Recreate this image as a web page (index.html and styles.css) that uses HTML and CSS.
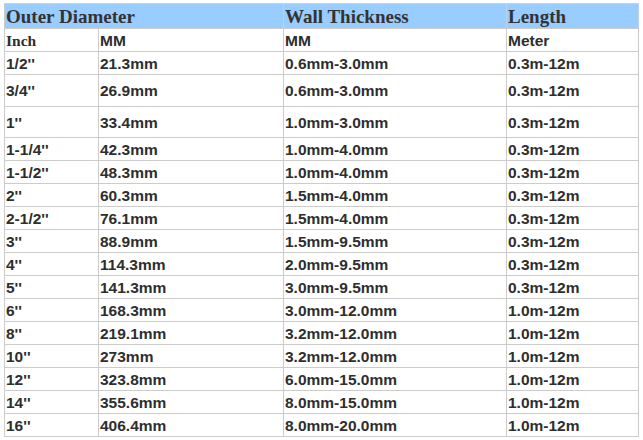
FILE: index.html
```html
<!DOCTYPE html>
<html>
<head>
<meta charset="utf-8">
<link rel="stylesheet" href="styles.css">
</head>
<body>
<table class="spec">
  <colgroup>
    <col class="c1"><col class="c2"><col class="c3"><col class="c4">
  </colgroup>
  <tr class="head">
    <th colspan="2">Outer Diameter</th>
    <th>Wall Thickness</th>
    <th>Length</th>
  </tr>
  <tr class="sub">
    <td class="serif">Inch</td><td>MM</td><td>MM</td><td>Meter</td>
  </tr>
  <tr><td>1/2''</td><td>21.3mm</td><td>0.6mm-3.0mm</td><td>0.3m-12m</td></tr>
  <tr class="tall"><td>3/4''</td><td>26.9mm</td><td>0.6mm-3.0mm</td><td>0.3m-12m</td></tr>
  <tr class="tall2"><td>1''</td><td>33.4mm</td><td>1.0mm-3.0mm</td><td>0.3m-12m</td></tr>
  <tr><td>1-1/4''</td><td>42.3mm</td><td>1.0mm-4.0mm</td><td>0.3m-12m</td></tr>
  <tr><td>1-1/2''</td><td>48.3mm</td><td>1.0mm-4.0mm</td><td>0.3m-12m</td></tr>
  <tr><td>2''</td><td>60.3mm</td><td>1.5mm-4.0mm</td><td>0.3m-12m</td></tr>
  <tr><td>2-1/2''</td><td>76.1mm</td><td>1.5mm-4.0mm</td><td>0.3m-12m</td></tr>
  <tr><td>3''</td><td>88.9mm</td><td>1.5mm-9.5mm</td><td>0.3m-12m</td></tr>
  <tr><td>4''</td><td>114.3mm</td><td>2.0mm-9.5mm</td><td>0.3m-12m</td></tr>
  <tr><td>5''</td><td>141.3mm</td><td>3.0mm-9.5mm</td><td>0.3m-12m</td></tr>
  <tr><td>6''</td><td>168.3mm</td><td>3.0mm-12.0mm</td><td>1.0m-12m</td></tr>
  <tr><td>8''</td><td>219.1mm</td><td>3.2mm-12.0mm</td><td>1.0m-12m</td></tr>
  <tr><td>10''</td><td>273mm</td><td>3.2mm-12.0mm</td><td>1.0m-12m</td></tr>
  <tr><td>12''</td><td>323.8mm</td><td>6.0mm-15.0mm</td><td>1.0m-12m</td></tr>
  <tr><td>14''</td><td>355.6mm</td><td>8.0mm-15.0mm</td><td>1.0m-12m</td></tr>
  <tr><td>16''</td><td>406.4mm</td><td>8.0mm-20.0mm</td><td>1.0m-12m</td></tr>
</table>
</body>
</html>
```
FILE: styles.css
```css
html, body {
  margin: 0;
  padding: 0;
  background: #ffffff;
}
body {
  padding: 3px 0 0 4px;
}
.spec {
  border-collapse: collapse;
  table-layout: fixed;
  width: 634px;
  color: #2e2e2e;
  font-family: "Liberation Sans", Arial, sans-serif;
  font-weight: bold;
  font-size: 15.5px;
}
.c1 { width: 94px; }
.c2 { width: 185px; }
.c3 { width: 223px; }
.c4 { width: 132px; }
.spec th, .spec td {
  border: 1px solid #cccccc;
  padding: 0 0 0 1px;
  text-align: left;
  vertical-align: middle;
  white-space: nowrap;
  line-height: 17px;
}
.spec td { height: 22px; }
.spec tr.head th {
  background: #99ccff;
  font-family: "Liberation Serif", "Times New Roman", serif;
  font-size: 19px;
  color: #333333;
  height: 24px;
  border-color: #b8d4ee;
  border-left-color: #cccccc;
  border-bottom-color: #cccccc;
}
.spec .serif {
  font-family: "Liberation Serif", "Times New Roman", serif;
  font-size: 15.5px;
}
.spec tr.tall td { height: 31px; }
.spec tr.tall2 td { height: 30px; }
```
